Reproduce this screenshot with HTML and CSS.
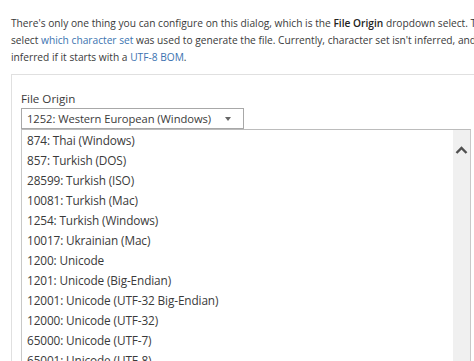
FILE: index.html
```html
<!DOCTYPE html>
<html>
<head>
<meta charset="utf-8">
<link rel="stylesheet" href="styles.css">
</head>
<body>
<p class="intro"><span class="line">There's only one thing you can configure on this dialog, which is the <b>File Origin</b> dropdown select. This lets you</span><span class="line">select <a href="#">which character set</a> was used to generate the file. Currently, character set isn't inferred, and UTF-8 is only</span><span class="line">inferred if it starts with a <a href="#">UTF-8 BOM</a>.</span></p>
<div class="dialog">
  <div class="label">File Origin</div>
  <div class="field">
    <div class="select">
      <span>1252: Western European (Windows)</span>
      <span class="caret"></span>
    </div>
    <div class="list">
      <ul class="items">
        <li>874: Thai (Windows)</li>
        <li>857: Turkish (DOS)</li>
        <li>28599: Turkish (ISO)</li>
        <li>10081: Turkish (Mac)</li>
        <li>1254: Turkish (Windows)</li>
        <li>10017: Ukrainian (Mac)</li>
        <li>1200: Unicode</li>
        <li>1201: Unicode (Big-Endian)</li>
        <li>12001: Unicode (UTF-32 Big-Endian)</li>
        <li>12000: Unicode (UTF-32)</li>
        <li>65000: Unicode (UTF-7)</li>
        <li>65001: Unicode (UTF-8)</li>
      </ul>
      <div class="scrollbar">
        <svg class="up" width="13" height="8" viewBox="0 0 13 8"><path d="M1.5 7 L6.5 2 L11.5 7" fill="none" stroke="#505050" stroke-width="2.4"/></svg>
      </div>
    </div>
  </div>
</div>
</body>
</html>
```
FILE: styles.css
```css
html, body {
  margin: 0;
  padding: 0;
  background: #fff;
  overflow: hidden;
}
body {
  width: 474px;
  height: 361px;
  font-family: "Open Sans", "Noto Sans", sans-serif;
  color: #3a3a3a;
}
.intro {
  margin: 0;
  padding: 15px 0 0 11px;
  font-size: 10.2px;
  line-height: 17px;
}
.intro .line {
  display: block;
  white-space: nowrap;
}
.intro b {
  font-weight: 600;
  color: #222;
}
.intro a {
  color: #3b73b0;
  text-decoration: none;
}
.dialog {
  margin: 8px 0 0 11px;
  width: 480px;
  height: 400px;
  border: 1px solid #e0e0e0;
  padding: 15px 0 0 9px;
  box-sizing: border-box;
}
.label {
  font-size: 11.6px;
  line-height: 18px;
  color: #3a3a3a;
}
.field {
  position: relative;
}
.select {
  width: 223px;
  height: 21px;
  box-sizing: border-box;
  border: 1px solid #a8a8a8;
  display: flex;
  align-items: center;
  justify-content: space-between;
  padding: 0 12px 0 5px;
  font-size: 11.2px;
  letter-spacing: -0.05px;
  color: #3a3a3a;
}
.caret {
  width: 0;
  height: 0;
  border-left: 3px solid transparent;
  border-right: 3px solid transparent;
  border-top: 4px solid #666;
}
.list {
  position: absolute;
  left: 0;
  top: 21px;
  width: 450px;
  height: 240px;
  box-sizing: border-box;
  border: 1px solid #c8c8c8;
  border-top-color: #bcbcbc;
  background: #fff;
  display: flex;
}
.items {
  list-style: none;
  margin: 0;
  padding: 0 0 0 5px;
  flex: 1;
  font-size: 11.8px;
  letter-spacing: -0.12px;
  line-height: 20px;
  color: #3a3a3a;
}
.items li {
  height: 20px;
  white-space: nowrap;
}
.scrollbar {
  width: 17px;
  background: #f0f0f0;
  display: flex;
  justify-content: center;
  align-items: flex-start;
  padding-top: 16px;
}
```
